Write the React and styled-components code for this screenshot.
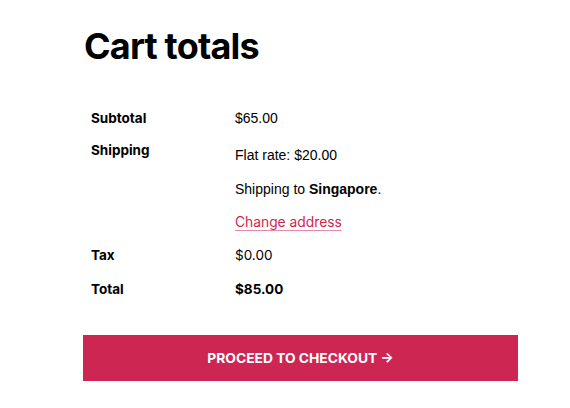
import React from 'react';
import styled, { createGlobalStyle } from 'styled-components';

const GlobalStyle = createGlobalStyle`
  body {
    margin: 0;
    background: #fff;
    color: #000;
    font-family: Inter, "Liberation Sans", sans-serif;
  }
`;

const Wrapper = styled.div`
  width: 435px;
  padding: 23px 0 0 83px;
`;

const Title = styled.h2`
  margin: 0 0 0 1px;
  font-size: 36px;
  line-height: 46px;
  font-weight: 700;
  letter-spacing: -0.8px;
`;

const Table = styled.div`
  margin-top: 33px;
  padding-left: 8px;
`;

const Row = styled.div`
  display: grid;
  grid-template-columns: 144px 1fr;
  padding: 8px 0;
  font-size: 13.5px;
  line-height: 17px;
  &:last-child { padding-top: 9px; }
`;

const Label = styled.div`
  font-weight: 700;
  margin-top: ${(p) => p.$offset || 0}px;
`;

const Value = styled.div`
  font-family: ${(p) => (p.$arial ? '"Liberation Sans", Arial, sans-serif' : 'Inter, sans-serif')};
  font-weight: ${(p) => (p.$bold ? 700 : 400)};
  padding-top: ${(p) => p.$offset || 0}px;
  font-size: ${(p) => (p.$arial ? '14px' : '13.5px')};
`;

const Line = styled.p`
  margin: 0 0 16.5px;
  font-family: ${(p) => (p.$arial ? '"Liberation Sans", Arial, sans-serif' : 'Inter, sans-serif')};
  font-size: ${(p) => (p.$arial ? '14px' : '13.8px')};
  &:last-child { margin-bottom: 0; }
`;

const Link = styled.a`
  color: #cd2653;
  text-decoration: underline;
  text-decoration-color: #e58aa2;
  text-underline-offset: 3px;
  text-decoration-thickness: 1px;
`;

const Button = styled.button`
  display: block;
  width: 435px;
  height: 46px;
  margin-top: 29px;
  border: none;
  background: #cd2653;
  color: #fff;
  font-family: Inter, sans-serif;
  font-weight: 700;
  font-size: 13.8px;
  letter-spacing: 0;
  text-transform: uppercase;
`;

export default function App() {
  return (
    <>
      <GlobalStyle />
      <Wrapper>
        <Title>Cart totals</Title>
        <Table>
          <Row>
            <Label>Subtotal</Label>
            <Value $arial>$65.00</Value>
          </Row>
          <Row>
            <Label $offset={-1}>Shipping</Label>
            <Value $offset={4}>
              <Line $arial>Flat rate: $20.00</Line>
              <Line $arial>
                Shipping to <strong>Singapore</strong>.
              </Line>
              <Line>
                <Link href="#">Change address</Link>
              </Line>
            </Value>
          </Row>
          <Row>
            <Label>Tax</Label>
            <Value>$0.00</Value>
          </Row>
          <Row>
            <Label>Total</Label>
            <Value $bold>$85.00</Value>
          </Row>
        </Table>
        <Button>Proceed to checkout →</Button>
      </Wrapper>
    </>
  );
}
